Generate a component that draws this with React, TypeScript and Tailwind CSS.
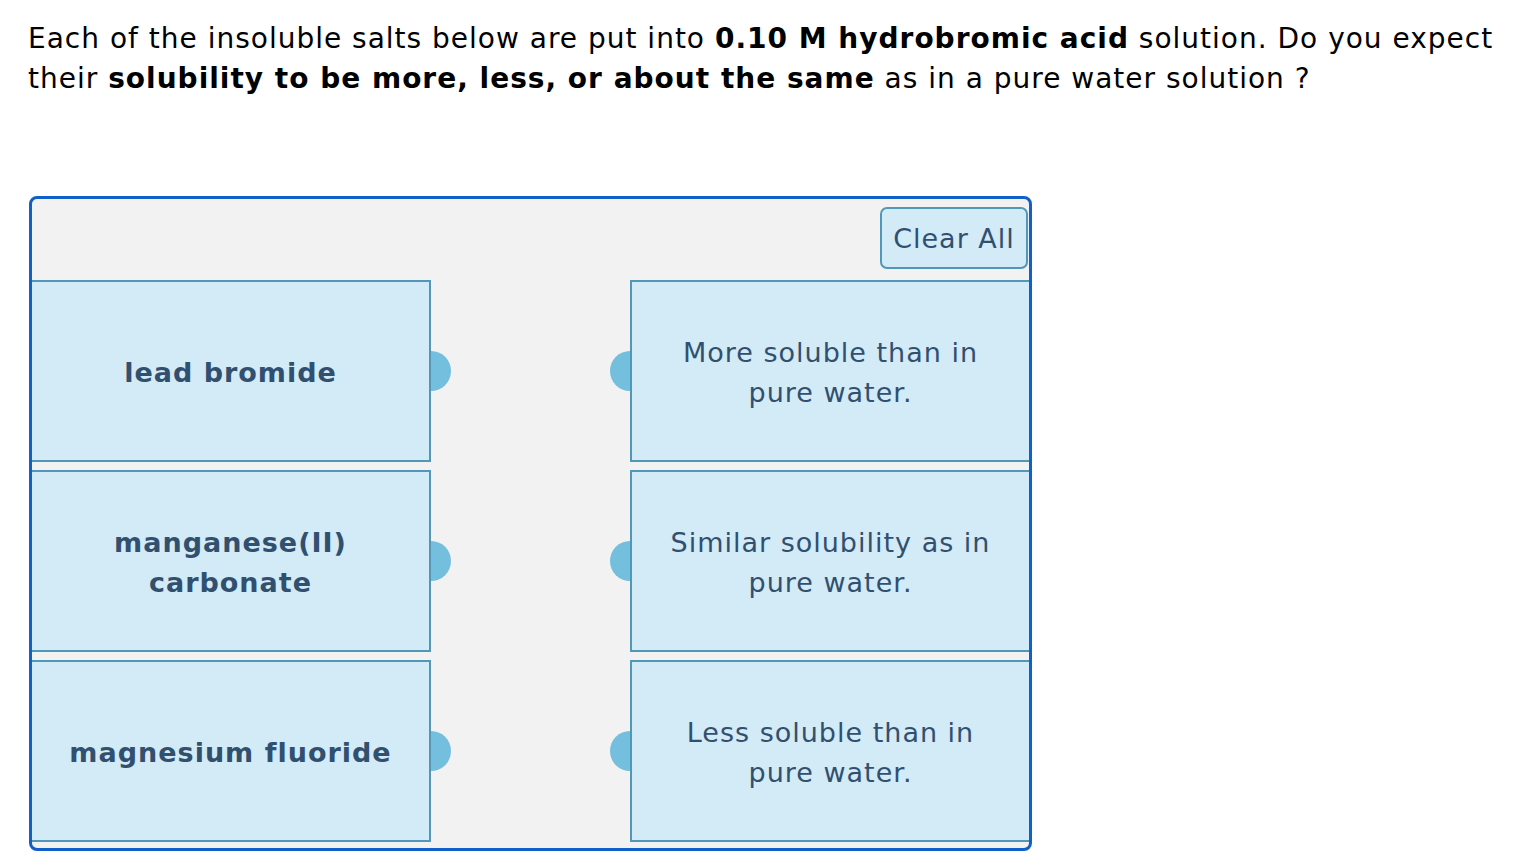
const salts = ["lead bromide", "manganese(II) carbonate", "magnesium fluoride"];

const answers = [
  "More soluble than in pure water.",
  "Similar solubility as in pure water.",
  "Less soluble than in pure water.",
];

const Prompt = function () {
  return (
    <p className="text-[28px] leading-[40px] tracking-[1px] text-black w-[1480px]">
      Each of the insoluble salts below are put into{" "}
      <b>0.10 M hydrobromic acid</b> solution. Do you expect their{" "}
      <b>solubility to be more, less, or about the same</b> as in a pure water
      solution ?
    </p>
  );
};

const SaltCard = function ({ label }: { label: string }) {
  return (
    <div className="relative h-[182px] w-[399px]">
      <span className="absolute right-[-20px] top-[71px] h-[40px] w-[40px] rounded-full bg-[#74bfdd]"></span>
      <div className="relative flex h-full items-center justify-center border-2 border-l-0 border-[#5097b8] bg-[#d3eaf7] px-6 pt-[4px] text-center text-[27px] leading-[40px] tracking-[1px] font-bold text-[#31506f]">
        {label}
      </div>
    </div>
  );
};

const AnswerCard = function ({ label }: { label: string }) {
  return (
    <div className="relative h-[182px] w-[399px]">
      <span className="absolute left-[-20px] top-[71px] h-[40px] w-[40px] rounded-full bg-[#74bfdd]"></span>
      <div className="relative flex h-full items-center justify-center border-2 border-r-0 border-[#5097b8] bg-[#d3eaf7] px-8 pt-[4px] text-center text-[27px] leading-[40px] tracking-[1px] text-[#31506f]">
        {label}
      </div>
    </div>
  );
};

export default function App() {
  return (
    <div
      className="min-h-screen bg-white px-[28px] pt-[19px]"
      style={{ fontFamily: '"DejaVu Sans", Verdana, sans-serif' }}
    >
      <Prompt></Prompt>

      <section className="ml-px mt-[97px] w-[1003px] overflow-hidden rounded-[8px] border-[3px] border-[#1060c8] bg-[#f2f2f2] pb-[6px]">
        <div className="flex justify-end pt-[8px] pr-px">
          <button className="h-[62px] w-[148px] rounded-[7px] border-2 border-[#5097b8] bg-[#d3eaf7] pt-[3px] text-[27px] tracking-[1px] text-[#31506f]">
            Clear All
          </button>
        </div>

        <div className="mt-[11px] flex justify-between">
          <div className="flex flex-col gap-[8px]">
            {salts.map((s) => (
              <SaltCard key={s} label={s}></SaltCard>
            ))}
          </div>
          <div className="flex flex-col gap-[8px]">
            {answers.map((a) => (
              <AnswerCard key={a} label={a}></AnswerCard>
            ))}
          </div>
        </div>
      </section>
    </div>
  );
}
